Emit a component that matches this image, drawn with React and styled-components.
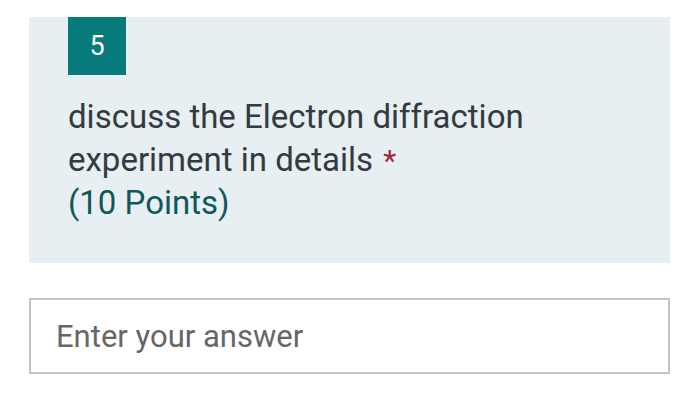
import React from 'react';
import styled, { createGlobalStyle } from 'styled-components';

const GlobalStyle = createGlobalStyle`
  body {
    margin: 0;
    background: #ffffff;
    font-family: Roboto, "Liberation Sans", sans-serif;
  }
`;

const Page = styled.div`
  padding: 17px 30px 0 29px;
`;

const QuestionCard = styled.section`
  background-color: #e7eff2;
  padding: 0 39px 39px 39px;
`;

const Badge = styled.div`
  width: 58px;
  height: 58px;
  background-color: #077a7c;
  color: #ffffff;
  font-size: 27px;
  display: flex;
  align-items: center;
  justify-content: center;
`;

const Title = styled.h2`
  margin: 20px 0 0 0;
  font-weight: 400;
  font-size: 33px;
  line-height: 43px;
  color: #333b3f;
`;

const Required = styled.span`
  color: #a4262c;
  padding-left: 10px;
  font-size: 30px;
  line-height: 1;
`;

const Points = styled.p`
  margin: 0;
  font-size: 33px;
  line-height: 43px;
  color: #0f5859;
`;

const AnswerBox = styled.div`
  margin-top: 35px;
  height: 72px;
  border: 2px solid #c4c4c4;
  display: flex;
  align-items: center;
  padding-left: 25px;
  font-size: 31px;
  color: #666666;
`;

const App = () => {
  return (
    <Page>
      <GlobalStyle />
      <QuestionCard>
        <Badge>5</Badge>
        <Title>
          discuss the Electron diffraction experiment in details<Required>*</Required>
        </Title>
        <Points>(10 Points)</Points>
      </QuestionCard>
      <AnswerBox>Enter your answer</AnswerBox>
    </Page>
  );
};

export default App;
